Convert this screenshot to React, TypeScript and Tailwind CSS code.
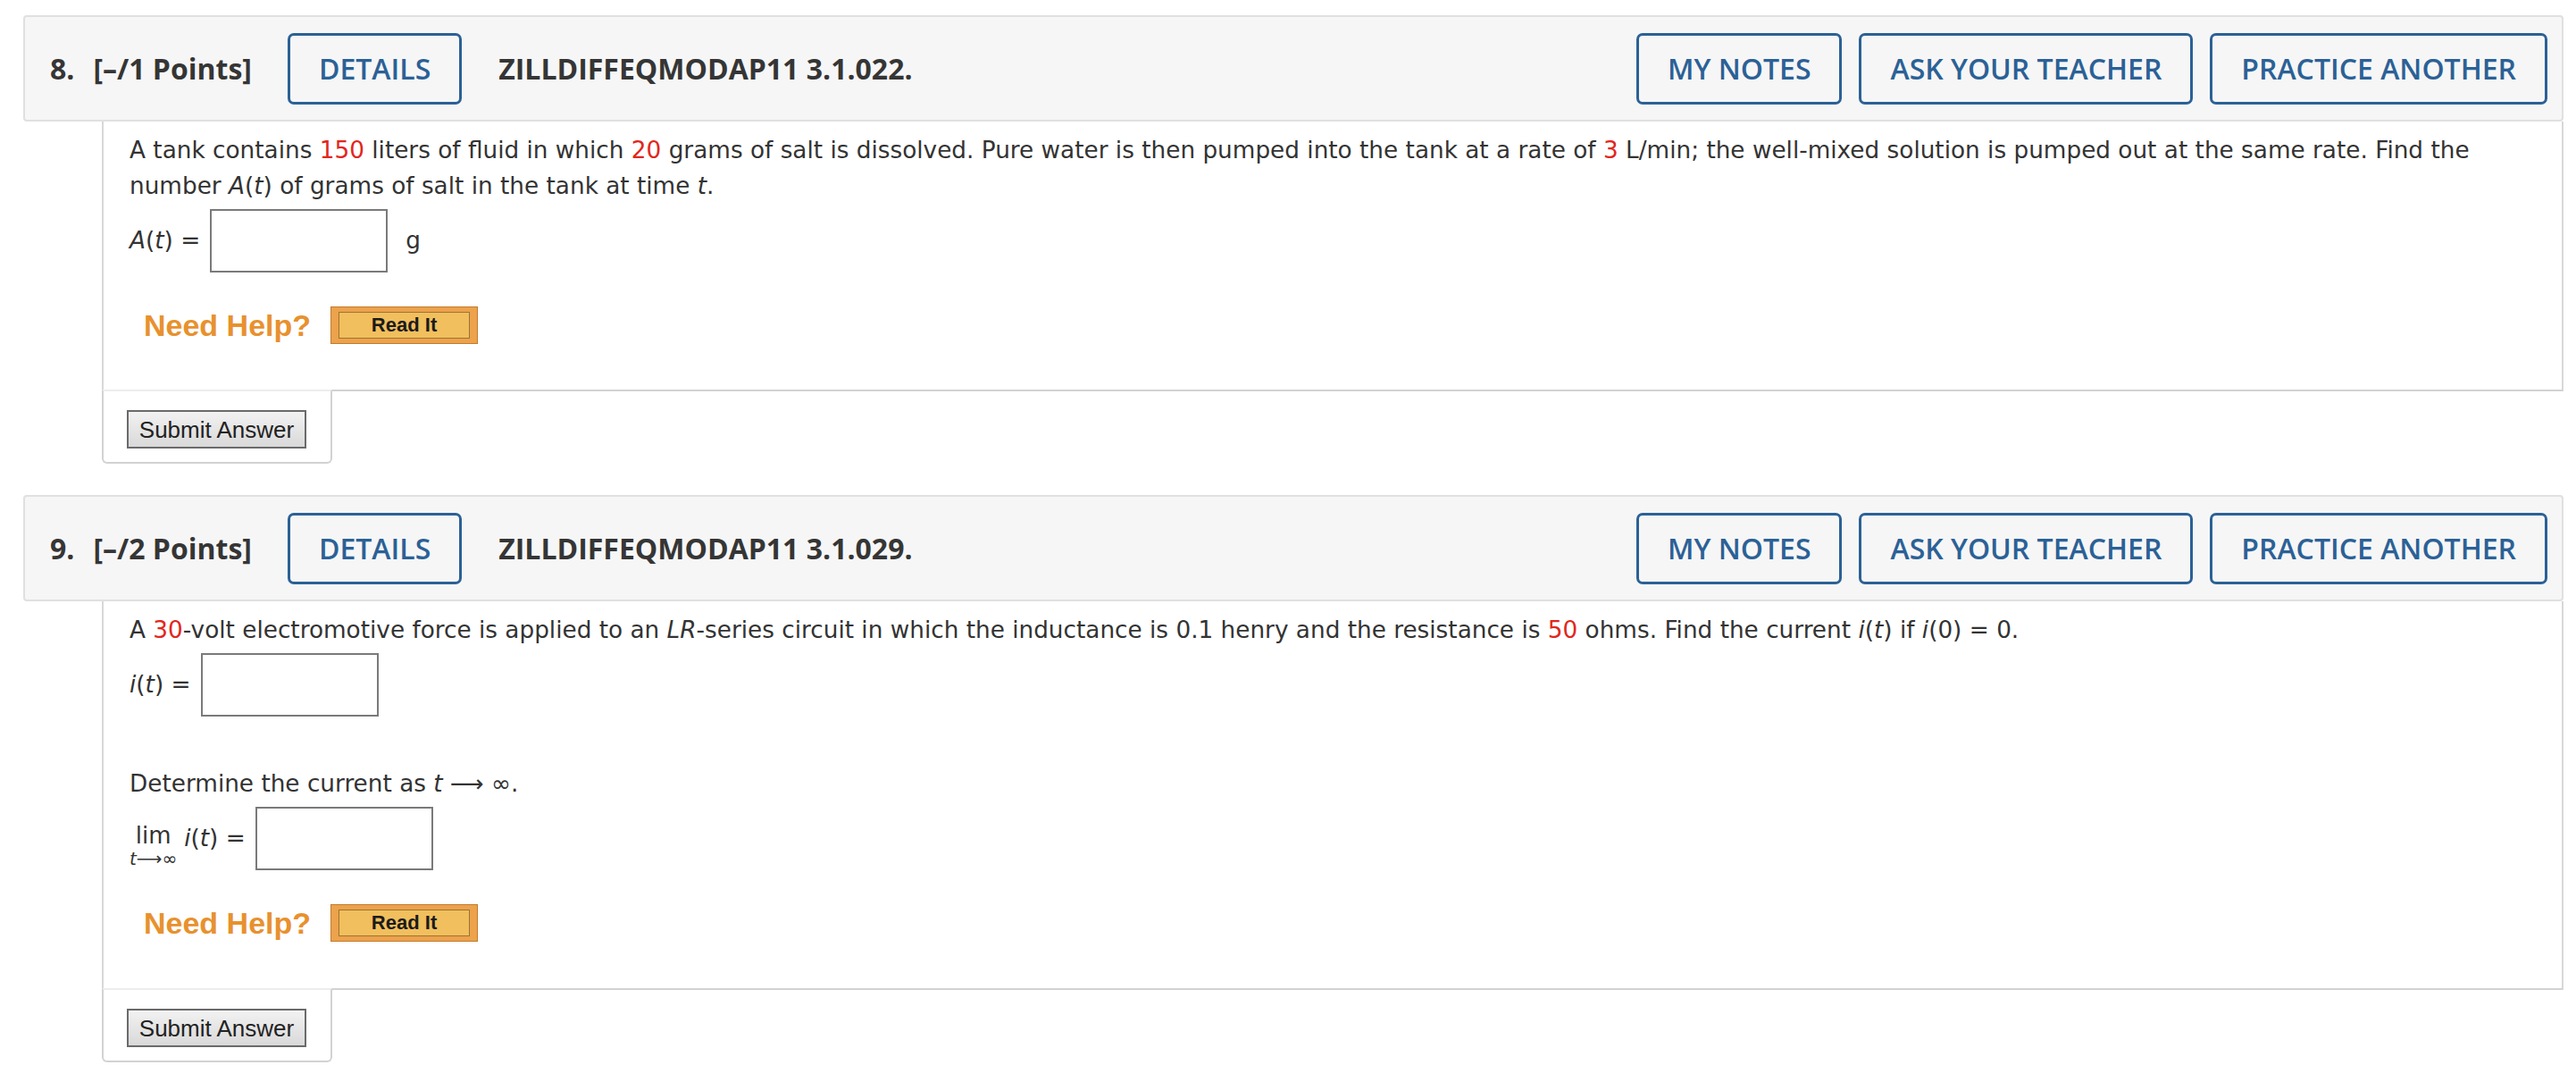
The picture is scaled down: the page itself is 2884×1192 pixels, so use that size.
import type { ReactNode } from "react";

const BLUE_BTN =
  "h-[80px] px-[32px] flex items-center border-[3px] border-[#2b6196] rounded-[7px] text-[#2b6196] text-[32px] font-semibold bg-[#f6f6f6]";

function Red({ children }: { children: ReactNode }) {
  return <span className="text-[#e2261c]">{children}</span>;
}

function AnswerBox() {
  return (
    <input
      type="text"
      readOnly
      className="w-[199px] h-[71px] border-2 border-[#7a7a7a] bg-white outline-none"
    />
  );
}

function NeedHelp() {
  return (
    <div className="flex items-center pl-[16px]">
      <span className="font-['Liberation_Sans',Arial,sans-serif] font-bold text-[34px] text-[#e8912e] leading-none">
        Need Help?
      </span>
      <div className="ml-[22px] w-[165px] h-[42px] border border-[#c27b2e] bg-[#eda24c] px-[8px] py-[5px]">
        <div className="h-full border border-[#9a7434] bg-[#f1bf5d] flex items-center justify-center font-['Liberation_Sans',Arial,sans-serif] font-bold text-[22px] text-[#1b1b1b] leading-none">
          Read It
        </div>
      </div>
    </div>
  );
}

function Question({
  num,
  points,
  code,
  children,
}: {
  num: string;
  points: string;
  code: string;
  children: ReactNode;
}) {
  return (
    <div>
      <div className="h-[119px] flex items-center bg-[#f6f6f6] border-2 border-[#e0e0e0] rounded-[4px] pl-[28px] pr-[16px] font-['Open_Sans',sans-serif] text-[32px] text-[#353535]">
        <span className="font-bold">{num}</span>
        <span className="font-bold ml-[21px]">{points}</span>
        <div className={BLUE_BTN + " ml-[40px]"}>DETAILS</div>
        <span className="font-bold ml-[41px]">{code}</span>
        <div className="ml-auto flex gap-[19px]">
          <div className={BLUE_BTN}>MY NOTES</div>
          <div className={BLUE_BTN}>ASK YOUR TEACHER</div>
          <div className={BLUE_BTN}>PRACTICE ANOTHER</div>
        </div>
      </div>

      <div className="ml-[88px] border-l-2 border-r-2 border-[#d8d8d8] pl-[29px] pt-[12px] font-['DejaVu_Sans',Verdana,sans-serif] text-[26.3px] text-[#333333]">
        {children}
      </div>

      <div className="ml-[88px] flex">
        <div className="w-[258px] h-[83px] border-2 border-[#d2d2d2] border-t-[#ededed] rounded-b-[6px] pl-[26px] pt-[21px]">
          <button className="w-[201px] h-[43px] border-2 border-[#6a6a6a] bg-gradient-to-b from-[#f2f2f2] to-[#d9d9d9] font-['Liberation_Sans',Arial,sans-serif] text-[26px] text-[#222222] leading-none">
            Submit Answer
          </button>
        </div>
        <div className="flex-1 border-t-2 border-r-2 border-[#d2d2d2] border-r-[#d8d8d8] h-[2px]" />
      </div>
    </div>
  );
}

export default function App() {
  return (
    <div className="w-[2884px] h-[1192px] bg-white pt-[17px] pl-[26px] pr-[14px] overflow-hidden">
      <Question num="8." points="[–/1 Points]" code="ZILLDIFFEQMODAP11 3.1.022.">
        <div className="pb-[51px]">
          <p className="leading-[40px]">
            A tank contains <Red>150</Red> liters of fluid in which <Red>20</Red> grams of salt is
            dissolved. Pure water is then pumped into the tank at a rate of <Red>3</Red> L/min; the
            well-mixed solution is pumped out at the same rate. Find the
            <br />
            number <i>A</i>(<i>t</i>) of grams of salt in the tank at time <i>t</i>.
          </p>
          <div className="mt-[6px] flex items-center">
            <span>
              <i>A</i>(<i>t</i>) =
            </span>
            <div className="ml-[11px]">
              <AnswerBox />
            </div>
            <span className="ml-[20px]">g</span>
          </div>
          <div className="mt-[38px]">
            <NeedHelp />
          </div>
        </div>
      </Question>

      <div className="h-[35px]" />

      <Question num="9." points="[–/2 Points]" code="ZILLDIFFEQMODAP11 3.1.029.">
        <div className="pb-[52px]">
          <p className="leading-[40px]">
            A <Red>30</Red>-volt electromotive force is applied to an <i>LR</i>-series circuit in
            which the inductance is 0.1 henry and the resistance is <Red>50</Red> ohms. Find the
            current <i>i</i>(<i>t</i>) if <i>i</i>(0) = 0.
          </p>
          <div className="mt-[6px] flex items-center">
            <span>
              <i>i</i>(<i>t</i>) =
            </span>
            <div className="ml-[11px]">
              <AnswerBox />
            </div>
          </div>
          <p className="mt-[55px] leading-[40px]">
            Determine the current as <i>t</i> ⟶ ∞.
          </p>
          <div className="mt-[6px] flex items-center">
            <div className="flex flex-col items-center leading-none pt-[16px]">
              <span className="text-[26px]">lim</span>
              <span className="text-[20px] mt-[3px] whitespace-nowrap">
                <i>t</i>⟶∞
              </span>
            </div>
            <span className="ml-[8px]">
              <i>i</i>(<i>t</i>) =
            </span>
            <div className="ml-[11px]">
              <AnswerBox />
            </div>
          </div>
          <div className="mt-[38px]">
            <NeedHelp />
          </div>
        </div>
      </Question>
    </div>
  );
}
